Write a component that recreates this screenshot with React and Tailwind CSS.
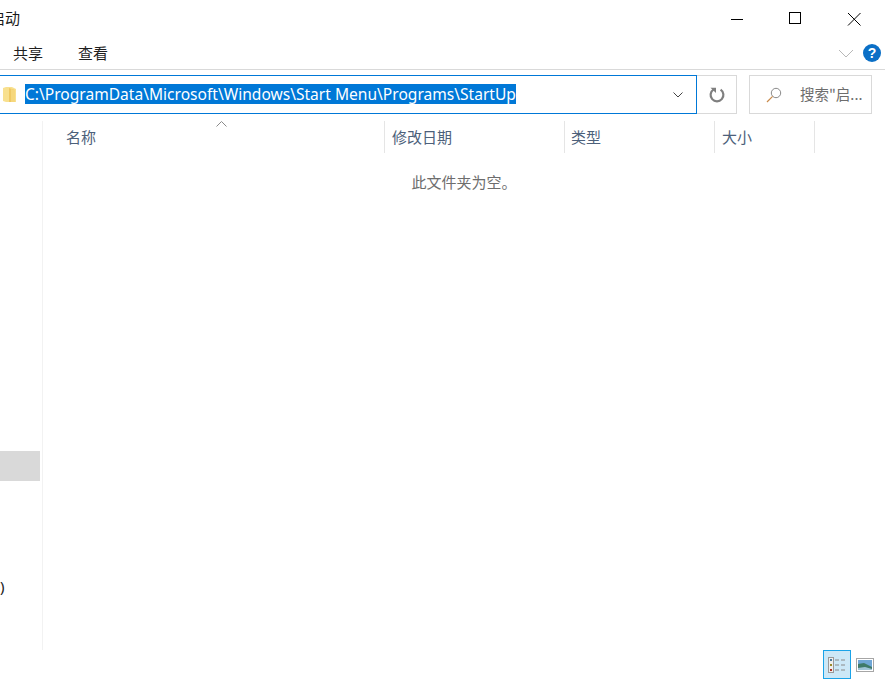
export default function App() {
  return (
    <div className="w-[885px] h-[680px] overflow-hidden bg-white flex flex-col text-[15px] font-['Noto_Sans','Noto_Sans_CJK_SC',sans-serif]">
      {/* title */}
      <div className="h-[37px] shrink-0 flex items-center justify-between">
        <span className="ml-[-10px] mb-[2px] leading-none text-[#1a1a1a] font-['Noto_Sans_CJK_SC',sans-serif]">启动</span>
        <div className="flex items-center mr-[2px]">
          <div className="w-[58px] flex justify-center">
            <svg width="12" height="12" viewBox="0 0 12 12"><path d="M0 6.5H12" stroke="#000" strokeWidth="1" /></svg>
          </div>
          <div className="w-[58px] flex justify-center mr-[1px]">
            <svg width="13" height="13" viewBox="0 0 13 13"><rect x="0.5" y="0.5" width="11" height="11" fill="none" stroke="#000" strokeWidth="1" /></svg>
          </div>
          <div className="w-[58px] flex justify-center">
            <svg width="14" height="14" viewBox="0 0 14 14"><path d="M1 1L13.5 13.5M13.5 1L1 13.5" stroke="#000" strokeWidth="1" /></svg>
          </div>
        </div>
      </div>
      {/* ribbon tabs */}
      <div className="h-[33px] shrink-0 flex items-center border-b border-b-[#d9d9d9] pl-[13px] pr-[4px] font-['Noto_Sans_CJK_SC',sans-serif]">
        <span className="text-[#1f1f1f] w-[65px] mb-[2px] leading-none">共享</span>
        <span className="text-[#1f1f1f] mb-[2px] leading-none">查看</span>
        <div className="ml-auto flex items-center gap-[9px]">
          <svg width="16" height="9" viewBox="0 0 16 9"><path d="M1 1L8 8L15 1" fill="none" stroke="#b8b8b8" strokeWidth="1" /></svg>
          <div className="w-[18px] h-[18px] rounded-full bg-[#0b6fc6] text-white text-[14px] font-bold flex items-center justify-center font-['Liberation_Sans',sans-serif] leading-none">?</div>
        </div>
      </div>
      {/* address row */}
      <div className="h-[39px] mt-[5px] shrink-0 flex">
        <div className="w-[698px] ml-[-1px] border border-[#0078d7] flex items-center">
          <svg className="ml-[3px] shrink-0" width="13" height="17" viewBox="0 0 13 17">
            <path d="M0 2L3 1H9L13 3V16H3L0 15Z" fill="#f8e08f" />
            <path d="M6 2L12 4V16H6Z" fill="#efc964" />
            <path d="M8 3L12 4V16H8Z" fill="#f6d77c" />
          </svg>
          <span className="ml-[9px] mb-[1px] bg-[#0078d7] text-white text-[15.57px] leading-[20px] h-[20px] whitespace-nowrap">C:\ProgramData\Microsoft\Windows\Start Menu\Programs\StartUp</span>
          <svg className="ml-auto mr-[13px]" width="10" height="6" viewBox="0 0 10 6"><path d="M0.5 0.5L5 5L9.5 0.5" fill="none" stroke="#444" strokeWidth="1" /></svg>
        </div>
        <div className="w-[40px] border border-l-0 border-[#d9d9d9] flex items-center justify-center">
          <svg width="16" height="16" viewBox="0 0 16 16" fill="none">
            <path d="M4.4 2.6A6.4 6.4 0 1 0 11.6 2.6" stroke="#7f7f7f" strokeWidth="2.2" />
            <path d="M1.5 0.8H7V6Z" fill="#7f7f7f" />
          </svg>
        </div>
        <div className="w-[123px] ml-[12px] border border-[#d9d9d9] flex items-center pl-[16px] font-['Noto_Sans_CJK_SC',sans-serif]">
          <svg width="16" height="16" viewBox="0 0 16 16" fill="none">
            <circle cx="10" cy="6" r="4.7" stroke="#8a8a8a" strokeWidth="1" />
            <path d="M6.6 9.4L1 15" stroke="#c98a4a" strokeWidth="1.2" />
          </svg>
          <span className="ml-[18px] mb-[2px] text-[14.5px] text-[#6d6d6d] whitespace-nowrap">搜索"启...</span>
        </div>
      </div>
      {/* body */}
      <div className="flex-1 flex min-h-0">
        <div className="w-[43px] h-[529px] mt-[7px] shrink-0 border-r border-r-[#f2f2f2] flex flex-col">
          <div className="mt-[330px] w-[40px] h-[30px] shrink-0 bg-[#d9d9d9]" />
          <span className="mt-[96px] ml-[0px] text-[15px] leading-[18px] text-[#1a1a1a]">)</span>
        </div>
        <div className="flex-1 flex flex-col relative">
          <div className="absolute left-[173px] top-[7px]">
            <svg width="11" height="6" viewBox="0 0 11 6"><path d="M0.5 5.5L5.5 0.5L10.5 5.5" fill="none" stroke="#8a8a8a" strokeWidth="1" /></svg>
          </div>
          <div className="flex h-[32px] mt-[7px] shrink-0 text-[#4c607a] font-['Noto_Sans_CJK_SC',sans-serif]">
            <div className="w-[342px] border-r border-r-[#e5e5e5] pl-[23px] pb-[2px] flex items-center leading-none">名称</div>
            <div className="w-[180px] border-r border-r-[#e5e5e5] pl-[7px] pb-[2px] flex items-center leading-none">修改日期</div>
            <div className="w-[150px] border-r border-r-[#e5e5e5] pl-[6px] pb-[2px] flex items-center leading-none">类型</div>
            <div className="w-[100px] border-r border-r-[#e5e5e5] pl-[7px] pb-[2px] flex items-center leading-none">大小</div>
          </div>
          <div className="mt-[21px] text-center text-[#6d6d6d] leading-none font-['Noto_Sans_CJK_SC',sans-serif]">此文件夹为空。</div>
          <div className="mt-auto mb-[1px] flex justify-end items-center pr-[11px] gap-[5px]">
            <div className="w-[28px] h-[29px] border border-[#1aa3e8] bg-[#cce8f7] flex items-center justify-center">
              <svg width="18" height="16" viewBox="0 0 18 16">
                <rect x="0.5" y="0.5" width="5" height="15" fill="#eee" stroke="#999" />
                <rect x="2" y="2" width="2" height="2" fill="#4a7a9a" />
                <rect x="2" y="7" width="2" height="2" fill="#9a8a2a" />
                <rect x="2" y="12" width="2" height="2" fill="#b03020" />
                <path d="M7 3H11M13 3H17M7 8H11M13 8H17M7 13H11M13 13H17" stroke="#8a8a8a" strokeWidth="1" />
              </svg>
            </div>
            <svg width="18" height="14" viewBox="0 0 18 14">
              <rect x="0.5" y="0.5" width="17" height="13" fill="#fff" stroke="#a6a6a6" />
              <rect x="2" y="2" width="14" height="10" fill="#6fa6d6" />
              <path d="M2 6L8 5L16 9V12H2Z" fill="#3f7a6a" />
              <path d="M2 10L9 9L16 11V12H2Z" fill="#9fc4d8" />
            </svg>
          </div>
        </div>
      </div>
    </div>
  );
}
